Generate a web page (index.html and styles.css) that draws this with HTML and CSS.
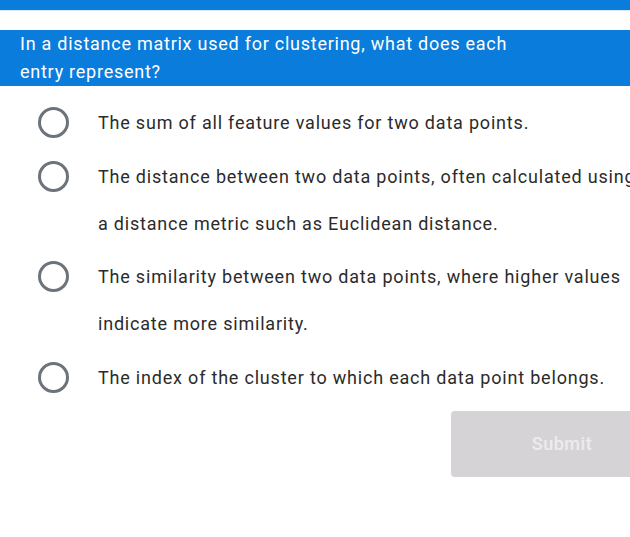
FILE: index.html
```html
<!DOCTYPE html>
<html lang="en">
<head>
    <meta charset="UTF-8">
    <meta name="viewport" content="width=device-width, initial-scale=1.0">
    <title>Quiz</title>
    <link rel="stylesheet" href="styles.css">
</head>
<body>
    <div class="topbar"></div>
    <div class="quiz">
        <div class="question">
            In a distance matrix used for clustering, what does each<br>entry represent?
        </div>

        <div class="options">
            <label class="option">
                <span class="radio"></span>
                <span class="option-text">The sum of all feature values for two data points.</span>
            </label>
            <label class="option">
                <span class="radio"></span>
                <span class="option-text">The distance between two data points, often calculated using<br>a distance metric such as Euclidean distance.</span>
            </label>
            <label class="option">
                <span class="radio"></span>
                <span class="option-text">The similarity between two data points, where higher values<br>indicate more similarity.</span>
            </label>
            <label class="option">
                <span class="radio"></span>
                <span class="option-text">The index of the cluster to which each data point belongs.</span>
            </label>
        </div>

        <div class="actions">
            <button class="submit" disabled>Submit</button>
        </div>
    </div>
</body>
</html>
```

FILE: styles.css
```css
*{
    box-sizing: border-box;
}
html, body{
    overflow: hidden;
}
body{
    margin: 0;
    font-family: Roboto, "Liberation Sans", sans-serif;
    background-color: #fff;
    width: 700px;
}
.topbar{
    height: 11px;
    background-color: #0a7cdc;
    border-bottom: 1px solid #dbe8f5;
}
.quiz{
    padding-top: 19px;
}
.question{
    background-color: #0a7cdc;
    color: #fff;
    font-size: 18px;
    line-height: 28px;
    padding: 0 20px;
    height: 56px;
    letter-spacing: 0.75px;
}
.options{
    display: flex;
    flex-direction: column;
    gap: 6.6px;
    padding-top: 13px;
}
.option{
    display: flex;
    align-items: flex-start;
    cursor: pointer;
}
.radio{
    flex: none;
    width: 31px;
    height: 31px;
    margin: 8px 29px 0 38px;
    border: 3px solid #6c737a;
    border-radius: 50%;
}
.option-text{
    font-size: 18px;
    line-height: 47px;
    color: #2b2b2b;
    letter-spacing: 0.8px;
    white-space: nowrap;
}
.actions{
    display: flex;
    padding: 10px 0 0 451px;
}
.submit{
    width: 222px;
    height: 66px;
    background-color: #d6d3d6;
    border: none;
    border-radius: 4px;
    color: #eeebee;
    font-family: Roboto, "Liberation Sans", sans-serif;
    font-size: 18px;
    font-weight: 500;
    letter-spacing: 0.5px;
}
```
